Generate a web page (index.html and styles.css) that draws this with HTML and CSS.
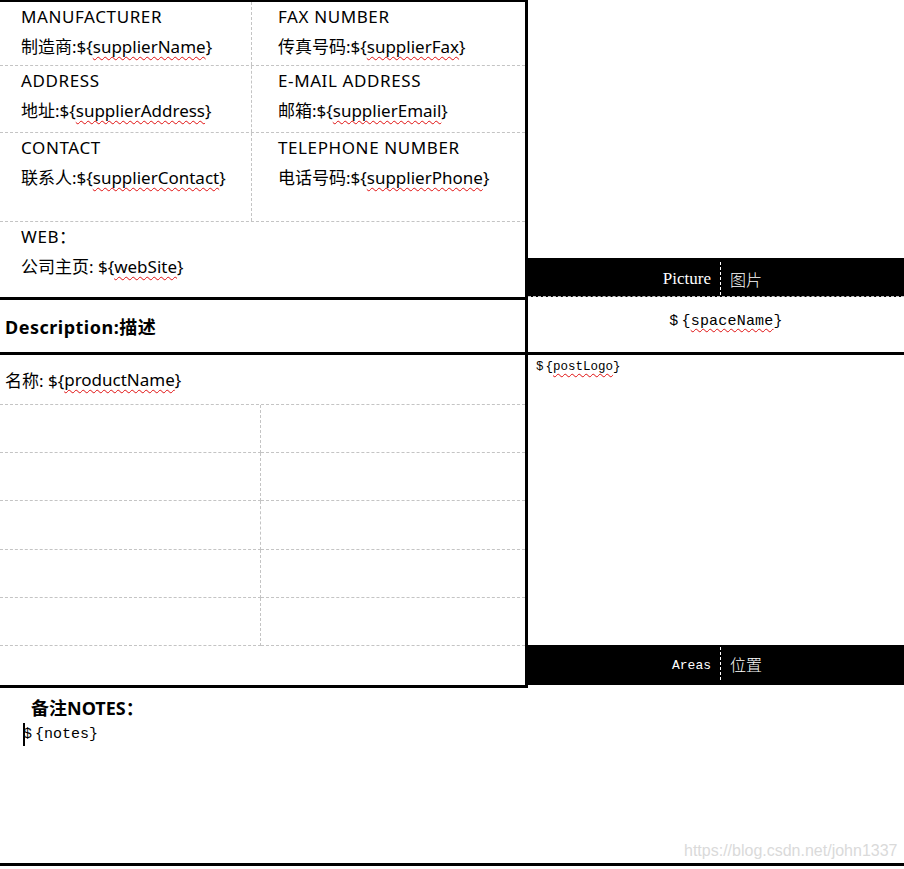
FILE: index.html
```html
<!DOCTYPE html>
<html lang="zh-CN">
<head>
<meta charset="utf-8">
<title>Product sheet</title>
<link rel="stylesheet" href="styles.css">
</head>
<body>
<div class="sheet">
  <div class="main">
    <section class="left">
      <div class="info">
        <div class="info-row r1">
          <div class="cell c1"><div class="lbl">MANUFACTURER</div><div>制造商:${<span class="sp">supplierName</span>}</div></div>
          <div class="cell c2"><div class="lbl">FAX NUMBER</div><div>传真号码:${<span class="sp">supplierFax</span>}</div></div>
        </div>
        <div class="info-row r2">
          <div class="cell c1"><div class="lbl">ADDRESS</div><div>地址:${<span class="sp">supplierAddress</span>}</div></div>
          <div class="cell c2"><div class="lbl">E-MAIL ADDRESS</div><div>邮箱:${<span class="sp">supplierEmail</span>}</div></div>
        </div>
        <div class="info-row r3">
          <div class="cell c1"><div class="lbl">CONTACT</div><div>联系人:${<span class="sp">supplierContact</span>}</div></div>
          <div class="cell c2"><div class="lbl">TELEPHONE NUMBER</div><div>电话号码:${<span class="sp">supplierPhone</span>}</div></div>
        </div>
        <div class="info-row r4">
          <div class="cell c1 wide"><div class="lbl">WEB：</div><div>公司主页: ${<span class="sp">webSite</span>}</div></div>
        </div>
      </div>
      <div class="desc">Description:描述</div>
      <div class="pname">名称: ${<span class="sp">productName</span>}</div>
      <div class="pgrid">
        <div class="g a"></div><div class="g b"></div>
        <div class="g a"></div><div class="g b"></div>
        <div class="g a"></div><div class="g b"></div>
        <div class="g a"></div><div class="g b"></div>
        <div class="g a"></div><div class="g b"></div>
      </div>
      <div class="blank"></div>
    </section>
    <section class="right">
      <div class="r-top"></div>
      <div class="band pic"><span class="band-l serif">Picture</span><span class="band-r">图片</span></div>
      <div class="space-name">$<span class="br">{</span><span class="sp">spaceName</span>}</div>
      <div class="logo">$<span class="br">{</span><span class="sp">postLogo</span>}</div>
      <div class="band areas"><span class="band-l mono">Areas</span><span class="band-r">位置</span></div>
    </section>
  </div>
  <div class="notes">
    <div class="notes-title">备注NOTES：</div>
    <div class="notes-val"><span class="caret"></span>$<span class="br">{</span>notes}</div>
  </div>
  <div class="watermark">https://blog.csdn.net/john1337</div>
</div>
</body>
</html>
```
FILE: styles.css
```css
* { box-sizing: border-box; }
html, body { margin: 0; padding: 0; background: #fff; }
body {
  font-family: "Noto Sans", "Noto Sans CJK SC", sans-serif;
  font-size: 17px;
  color: #000;
}
.sheet { position: relative; width: 904px; height: 869px; }
.main { display: flex; align-items: flex-start; }

.left {
  width: 528px;
  border-top: 2px solid #000;
  border-right: 3px solid #000;
  border-bottom: 3px solid #000;
}
.info-row { display: flex; border-bottom: 1px dashed #c4c4c4; }
.info-row.r1 { height: 64px; }
.info-row.r2 { height: 67px; }
.info-row.r3 { height: 89px; }
.info-row.r4 { height: 75px; border-bottom: 0; }
.cell { line-height: 30px; white-space: nowrap; }
.cell .lbl { letter-spacing: 0.6px; }
.cell.c1 { width: 252px; padding-left: 21px; border-right: 1px dashed #c4c4c4; }
.cell.c2 { flex: 1; padding-left: 26px; }
.cell.wide { width: auto; flex: 1; border-right: 0; }

.sp {
  text-decoration: underline wavy #e01010;
  text-decoration-thickness: 1px;
  text-underline-offset: 3px;
  text-decoration-skip-ink: none;
}
.br { margin-left: 3px; }

.desc {
  height: 58px;
  border-top: 3px solid #000;
  border-bottom: 3px solid #000;
  padding-left: 5px;
  display: flex; align-items: center;
  font-weight: 700; font-size: 18px;
  letter-spacing: 0.5px;
}
.pname {
  height: 50px;
  padding-left: 5px;
  border-bottom: 1px dashed #c4c4c4;
  display: flex; align-items: center;
  white-space: nowrap;
}
.pgrid { display: grid; grid-template-columns: 261px 1fr; grid-template-rows: 48px 48px 49px 48px 48px; }
.g { border-bottom: 1px dashed #c4c4c4; }
.g.a { border-right: 1px dashed #c4c4c4; }
.blank { height: 39px; }

.right { flex: 1; height: 685px; display: flex; flex-direction: column; }
.r-top { height: 258px; }
.band {
  background: #000; color: #fff;
  display: flex; align-items: stretch;
}
.band.pic { height: 39px; border-bottom: 1px dashed #c8c8c8; }
.band.areas { height: 40px; }
.band-l {
  width: 192px;
  padding-right: 9px;
  display: flex; align-items: center; justify-content: flex-end;
}
.band-r {
  flex: 1;
  border-left: 1px dashed #fff;
  padding-left: 9px;
  margin: 4px 0 1px;
  display: flex; align-items: center;
  font-size: 16px;
  font-family: "Noto Sans CJK SC", sans-serif;
  font-weight: 300;
}
.band.areas .band-r { margin: 2px 0 5px; }
.serif { font-family: "Liberation Serif", serif; font-size: 17px; padding-top: 4px; }
.mono { font-family: "Liberation Mono", monospace; font-size: 13px; }

.space-name {
  height: 58px;
  border-bottom: 3px solid #000;
  text-align: center;
  padding: 13px 0 0 20px;
  line-height: 24px;
  font-family: "Liberation Mono", monospace;
  font-size: 15px;
  letter-spacing: 0.2px;
}
.logo {
  height: 290px;
  padding: 4px 8px;
  line-height: 16px;
  font-family: "Liberation Mono", monospace;
  font-size: 12.5px;
}
.logo .br { margin-left: 2px; }

.notes {
  height: 178px;
  border-bottom: 3px solid #000;
}
.notes-title {
  padding: 8px 0 0 31px;
  line-height: 24px;
  font-weight: 700;
  font-size: 18px;
}
.notes-val {
  padding-left: 23px;
  padding-top: 2px;
  line-height: 26px;
  font-family: "Liberation Mono", monospace;
  font-size: 15px;
}
.caret {
  display: inline-block;
  width: 2px; height: 23px;
  background: #000;
  vertical-align: middle;
  margin-right: -2px;
}
.watermark {
  position: absolute;
  left: 684px; top: 841px;
  font-family: "Liberation Sans", sans-serif;
  font-size: 16px;
  color: #dadada;
  line-height: 20px;
}
```
